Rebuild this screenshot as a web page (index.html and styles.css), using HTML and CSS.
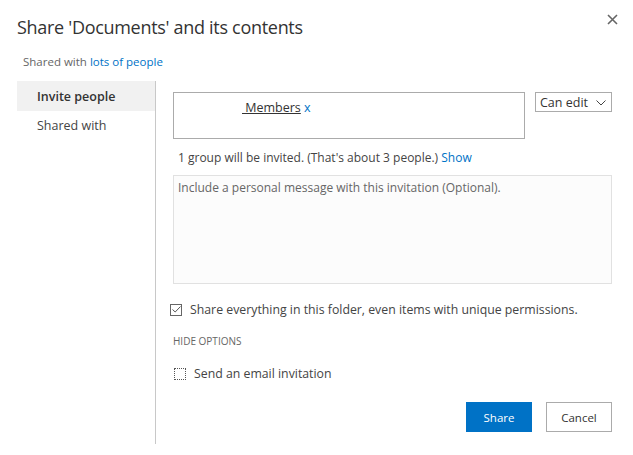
FILE: index.html
```html
<!DOCTYPE html>
<html lang="en">
<head>
    <meta charset="UTF-8">
    <title>Share 'Documents'</title>
    <link rel="stylesheet" href="styles.css">
</head>
<body>
    <div class="dialog">
        <div class="dialog-header">
            <h1>Share 'Documents' and its contents</h1>
            <button class="close-btn" title="Close">
                <svg width="11" height="11" viewBox="0 0 11 11"><path d="M1 1L10 10M10 1L1 10" stroke="#666" stroke-width="1.6"/></svg>
            </button>
        </div>
        <div class="shared-summary">Shared with <a href="#">lots of people</a></div>

        <div class="dialog-body">
            <ul class="side-nav">
                <li class="active">Invite people</li>
                <li>Shared with</li>
            </ul>

            <div class="content">
                <div class="invite-row">
                    <div class="people-box">
                        <span class="entity"><u>&nbsp;Members</u> <a href="#">x</a></span>
                    </div>
                    <div class="perm-select">
                        <span>Can edit</span>
                        <svg width="10" height="6" viewBox="0 0 10 6"><path d="M0.5 0.5L5 5L9.5 0.5" fill="none" stroke="#444" stroke-width="1"/></svg>
                    </div>
                </div>
                <div class="invite-note">1 group will be invited. (That's about 3 people.) <a href="#">Show</a></div>
                <div class="message-box">Include a personal message with this invitation (Optional).</div>

                <label class="check-row">
                    <span class="checkbox checked">
                        <svg width="9" height="7" viewBox="0 0 9 7"><path d="M0.5 3.5L3.2 6L8.5 0.5" fill="none" stroke="#555" stroke-width="1"/></svg>
                    </span>
                    Share everything in this folder, even items with unique permissions.
                </label>
                <div class="options-toggle">HIDE OPTIONS</div>
                <label class="check-row email-row">
                    <span class="checkbox dotted"></span>
                    Send an email invitation
                </label>

                <div class="actions">
                    <button class="btn primary">Share</button>
                    <button class="btn">Cancel</button>
                </div>
            </div>
        </div>
    </div>
</body>
</html>
```

FILE: styles.css
```css
/* Share dialog */
body {
    margin: 0;
    font-family: "Open Sans", "Noto Sans", sans-serif;
    color: #444;
    background: #fff;
}
a {
    color: #0072c6;
    text-decoration: none;
}
.dialog {
    width: 633px;
    height: 455px;
    box-sizing: border-box;
    padding: 0 21px 0 17px;
}
.dialog-header {
    display: flex;
    justify-content: space-between;
    align-items: flex-start;
    padding-top: 13px;
}
.dialog-header h1 {
    margin: 0;
    font-size: 18px;
    letter-spacing: -0.3px;
    font-weight: 400;
    color: #333;
    line-height: 28px;
}
.close-btn {
    border: none;
    background: none;
    padding: 0;
    margin: 1px -6px 0 0;
    width: 11px;
    height: 11px;
    cursor: pointer;
    display: flex;
}
.shared-summary {
    margin: 13px 0 0 6px;
    font-size: 11.5px;
    color: #666;
    line-height: 16px;
}
.dialog-body {
    display: flex;
    margin-top: 11px;
}
.side-nav {
    list-style: none;
    margin: 0;
    padding: 0;
    width: 138px;
    height: 363px;
    border-right: 1px solid #c8c8c8;
}
.side-nav li {
    padding: 0 0 0 20px;
    line-height: 30px;
    font-size: 12.5px;
    color: #444;
}
.side-nav li.active {
    background: #f1f1f1;
    font-weight: 600;
    color: #333;
    padding-top: 2px;
    line-height: 28px;
}
.content {
    flex: 1;
    padding: 11px 0 0 17px;
}
.invite-row {
    display: flex;
    align-items: flex-start;
    gap: 10px;
}
.people-box {
    border: 1px solid #ababab;
    padding: 5px 0 0 68px;
    box-sizing: border-box;
    width: 352px;
    height: 47px;
    font-size: 12.5px;
    line-height: 20px;
}
.people-box u {
    color: #333;
}
.perm-select {
    flex: 1;
    height: 20px;
    border: 1px solid #ababab;
    box-sizing: border-box;
    display: flex;
    align-items: center;
    justify-content: space-between;
    padding: 1px 5px 0 4px;
    font-size: 12.5px;
    color: #333;
}
.invite-note {
    margin: 10px 0 0 5px;
    font-size: 12px;
    line-height: 18px;
    color: #444;
}
.message-box {
    margin-top: 8px;
    height: 109px;
    border: 1px solid #e1e1e1;
    background: #fcfcfc;
    box-sizing: border-box;
    padding: 3px 4px;
    font-size: 12px;
    line-height: 18px;
    color: #666;
}
.check-row {
    display: flex;
    align-items: center;
    gap: 8px;
    font-size: 12.3px;
    color: #444;
    margin: 17px 0 0 -3px;
}
.checkbox {
    width: 12px;
    height: 12px;
    box-sizing: border-box;
    border: 1px solid #666;
    display: flex;
    align-items: center;
    justify-content: center;
}
.checkbox.dotted {
    border: 1px dotted #555;
}
.options-toggle {
    margin-top: 16px;
    font-size: 10px;
    color: #666;
    line-height: 14px;
}
.email-row {
    margin: 17px 0 0 1px;
}
.actions {
    display: flex;
    justify-content: flex-end;
    gap: 14px;
    margin-top: 20px;
}
.btn {
    width: 66px;
    height: 30px;
    border: 1px solid #ababab;
    background: #fff;
    font-family: inherit;
    font-size: 11.5px;
    color: #333;
    cursor: pointer;
}
.btn.primary {
    background: #0072c6;
    border-color: #0072c6;
    color: #fff;
}
```
